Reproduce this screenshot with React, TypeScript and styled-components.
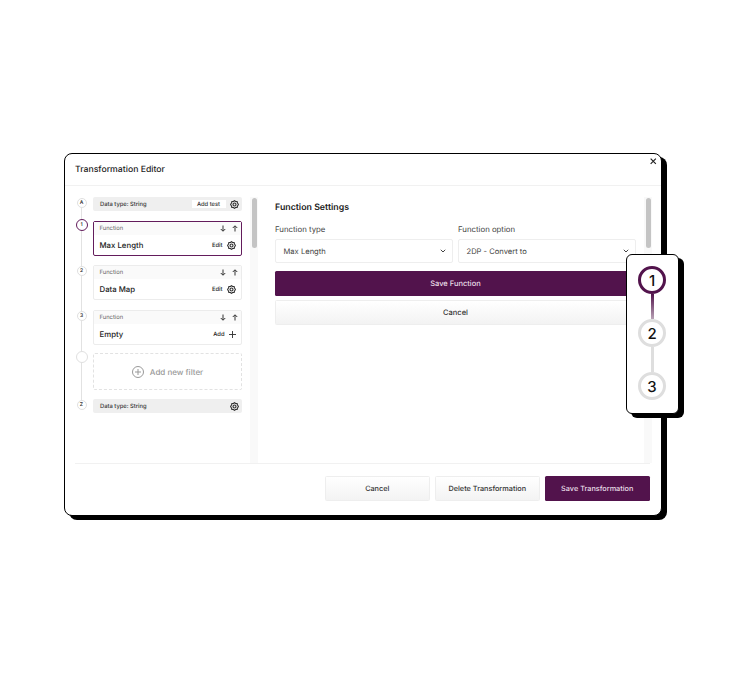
import React from "react";
import styled, { createGlobalStyle } from "styled-components";

const Global = createGlobalStyle`
  html, body { margin: 0; padding: 0; background: #fff; }
  body { font-family: Inter, "Liberation Sans", sans-serif; color: #222; text-rendering: geometricPrecision; }
`;

const Page = styled.div`
  width: 750px;
  height: 673px;
  padding: 153px 0 0 64px;
  box-sizing: border-box;
  overflow: hidden;
`;

const Modal = styled.div`
  position: relative;
  width: 598px;
  height: 362.5px;
  box-sizing: border-box;
  background: #fff;
  border: 1.5px solid #000;
  border-radius: 8px;
  box-shadow: 5px 4px 0 0 #000;
  display: flex;
  flex-direction: column;
`;

const Header = styled.div`
  height: 31px;
  padding-left: 10px;
  display: flex;
  align-items: center;
  border-bottom: 1px solid #f1f1f1;
  font-size: 8.7px;
  font-weight: 500;
  color: #222;
  flex: none;
`;

const Close = styled.svg`
  position: absolute;
  top: 4px;
  right: 4.5px;
  width: 6.5px;
  height: 6.5px;
`;

const Body = styled.div`
  flex: 1;
  min-height: 0;
  margin: 0 11px 0 10px;
  display: flex;
  border-bottom: 1px solid #f1f1f1;
  padding-top: 11px;
`;

const Timeline = styled.div`
  position: relative;
  width: 167px;
  flex: none;
  display: flex;
  flex-direction: column;
`;

const Rail = styled.div`
  position: absolute;
  left: 5.5px;
  top: 8px;
  width: 1.5px;
  height: 200px;
  background: #e2e2e2;
`;

const Row = styled.div<{ $mt: number }>`
  position: relative;
  display: flex;
  align-items: center;
  margin-top: ${(p) => p.$mt}px;
`;

const Marker = styled.div<{ $active?: boolean; $big?: boolean }>`
  position: absolute;
  left: ${(p) => (p.$big || p.$active ? "0.5px" : "1.5px")};
  top: ${(p) => (p.$big || p.$active ? "-2px" : "1px")};
  width: ${(p) => (p.$big || p.$active ? 12 : 10)}px;
  height: ${(p) => (p.$big || p.$active ? 12 : 10)}px;
  box-sizing: border-box;
  border-radius: 50%;
  background: #fff;
  border: ${(p) => (p.$active ? "1.5px solid #631c5c" : "1px solid #e0e0e0")};
  display: flex;
  align-items: center;
  justify-content: center;
  font-size: 5px;
  font-weight: 600;
  color: #333;
`;

const RowContent = styled.div`
  margin-left: 18px;
  width: 149px;
`;

const TypeBar = styled.div`
  height: 14px;
  box-sizing: border-box;
  background: #efefef;
  border-radius: 2px;
  padding: 0 3px 0 7px;
  display: flex;
  align-items: center;
  font-size: 5.8px;
  font-weight: 500;
  color: #333;
`;

const Grow = styled.div`
  flex: 1;
`;

const AddTest = styled.div`
  width: 34px;
  height: 8px;
  background: #fff;
  display: flex;
  align-items: center;
  justify-content: center;
  font-size: 5.8px;
  font-weight: 500;
  margin-right: 4.5px;
`;

const Card = styled.div<{ $active?: boolean }>`
  height: 35px;
  box-sizing: border-box;
  border-radius: 2px;
  border: ${(p) => (p.$active ? "1.5px solid #631c5c" : "1px solid #ececec")};
  display: flex;
  flex-direction: column;
  background: #fff;
`;

const CardHead = styled.div`
  height: 12.5px;
  background: #fafafa;
  padding: 0 3px 0 5.5px;
  display: flex;
  align-items: center;
  font-size: 5.8px;
  color: #666;
  flex: none;
`;

const Arrows = styled.div`
  display: flex;
  gap: 6px;
`;

const CardBody = styled.div`
  flex: 1;
  display: flex;
  align-items: center;
  padding: 1px 5px 0 5.5px;
  font-size: 7.8px;
  font-weight: 500;
  color: #222;
`;

const CardAction = styled.span`
  font-size: 5.8px;
  font-weight: 500;
  margin-right: 4.5px;
`;

const AddFilter = styled.div`
  height: 37px;
  box-sizing: border-box;
  border: 1px dashed #e2e2e2;
  border-radius: 2px;
  display: flex;
  align-items: center;
  justify-content: center;
  gap: 6px;
  font-size: 8px;
  font-weight: 500;
  color: #999;
`;

const Track = styled.div`
  width: 8px;
  flex: none;
  background: #f9f9f9;
  margin-left: 8px;
  padding: 1px 1.5px 0;
  box-sizing: border-box;
`;

const Thumb = styled.div`
  width: 5px;
  height: 50px;
  border-radius: 3px;
  background: #c4c4c4;
`;

const Settings = styled.div`
  width: 361px;
  margin-left: 17px;
  flex: none;
  display: flex;
  flex-direction: column;
`;

const SettingsTitle = styled.div`
  font-size: 8.8px;
  font-weight: 600;
  color: #222;
  line-height: 11px;
  margin-top: 5px;
`;

const Fields = styled.div`
  display: grid;
  grid-template-columns: 178px 178px;
  column-gap: 5px;
  margin-top: 11px;
`;

const Field = styled.div`
  display: flex;
  flex-direction: column;
`;

const Label = styled.div`
  font-size: 7.8px;
  line-height: 10px;
  color: #444;
  margin-bottom: 5px;
`;

const Select = styled.div`
  height: 24px;
  box-sizing: border-box;
  border: 1px solid #eee;
  border-radius: 2px;
  padding: 0 6px 0 7.5px;
  display: flex;
  align-items: center;
  justify-content: space-between;
  font-size: 7.6px;
  color: #444;
`;

const PrimaryWide = styled.div`
  height: 25px;
  margin-top: 8px;
  background: #52134c;
  border-radius: 1.5px;
  color: #e9dfe8;
  display: flex;
  align-items: center;
  justify-content: center;
  font-size: 7.5px;
  font-weight: 500;
`;

const SecondaryWide = styled.div`
  height: 25px;
  margin-top: 4px;
  box-sizing: border-box;
  border: 1px solid #eee;
  border-radius: 1.5px;
  background: linear-gradient(#fff, #f3f3f3);
  display: flex;
  align-items: center;
  justify-content: center;
  font-size: 7.5px;
  font-weight: 500;
  color: #333;
`;

const Footer = styled.div`
  height: 50.5px;
  flex: none;
  display: flex;
  justify-content: flex-end;
  gap: 4.5px;
  padding: 12px 11px 0 0;
  box-sizing: border-box;
`;

const FooterBtn = styled.div<{ $primary?: boolean }>`
  width: 105.5px;
  height: 25px;
  box-sizing: border-box;
  border-radius: 1.5px;
  display: flex;
  align-items: center;
  justify-content: center;
  font-size: 7.3px;
  font-weight: 500;
  ${(p) =>
    p.$primary
      ? "background: #52134c; color: #e9dfe8;"
      : "border: 1px solid #eee; background: linear-gradient(#fff, #f3f3f3); color: #333;"}
`;

const Stepper = styled.div`
  position: absolute;
  left: 560.5px;
  top: 99.5px;
  width: 53px;
  height: 160px;
  box-sizing: border-box;
  background: #fff;
  border: 1.5px solid #000;
  border-radius: 6px;
  box-shadow: 5px 4px 0 0 #000;
  display: flex;
  flex-direction: column;
  align-items: center;
  padding-top: 11.5px;
`;

const Step = styled.div<{ $active?: boolean }>`
  width: 28px;
  height: 28px;
  box-sizing: border-box;
  border-radius: 50%;
  border: 3px solid ${(p) => (p.$active ? "#52134c" : "#dedede")};
  display: flex;
  align-items: center;
  justify-content: center;
  font-size: 15px;
  font-weight: 500;
  color: #111;
  background: #fff;
`;

const StepLine = styled.div<{ $active?: boolean }>`
  width: 3px;
  height: 25px;
  background: ${(p) => (p.$active ? "linear-gradient(#52134c, #b9a3b6)" : "#dedede")};
`;

const Gear = () => (
  <svg width="9" height="9" viewBox="0 0 24 24" fill="none" stroke="#333" strokeWidth="3" strokeLinejoin="round">
    <path d="M12 1.5 15 4h4l1 4 2.5 4-2.5 4-1 4h-4l-3 2.5L9 20H5l-1-4-2.5-4L4 8l1-4h4z" />
    <circle cx="12" cy="12" r="4" />
  </svg>
);

const Down = () => (
  <svg width="6" height="7" viewBox="0 0 12 14" fill="none" stroke="#333" strokeWidth="2">
    <path d="M6 1v11M1.5 8 6 12.5 10.5 8" />
  </svg>
);

const Up = () => (
  <svg width="6" height="7" viewBox="0 0 12 14" fill="none" stroke="#333" strokeWidth="2">
    <path d="M6 13V2M1.5 6 6 1.5 10.5 6" />
  </svg>
);

const Plus = () => (
  <svg width="7" height="7" viewBox="0 0 12 12" fill="none" stroke="#333" strokeWidth="1.6">
    <path d="M6 0v12M0 6h12" />
  </svg>
);

const Chevron = () => (
  <svg width="6" height="4" viewBox="0 0 12 8" fill="none" stroke="#444" strokeWidth="2">
    <path d="M1.5 1.5 6 6l4.5-4.5" />
  </svg>
);

const functions = [
  { n: "2", name: "Data Map", action: "Edit", icon: <Gear />, mt: 9 },
  { n: "3", name: "Empty", action: "Add", icon: <Plus />, mt: 10 },
];

const FunctionHead = () => (
  <CardHead>
    Function
    <Grow />
    <Arrows>
      <Down />
      <Up />
    </Arrows>
  </CardHead>
);

export default function App() {
  return (
    <Page>
      <Global />
      <Modal>
        <Header>Transformation Editor</Header>
        <Close viewBox="0 0 10 10" fill="none" stroke="#222" strokeWidth="1.8">
          <path d="M1 1l8 8M9 1 1 9" />
        </Close>
        <Body>
          <Timeline>
            <Rail />
            <Row $mt={0}>
              <Marker>A</Marker>
              <RowContent>
                <TypeBar>
                  Data type: String
                  <Grow />
                  <AddTest>Add test</AddTest>
                  <Gear />
                </TypeBar>
              </RowContent>
            </Row>
            <Row $mt={10}>
              <Marker $active>1</Marker>
              <RowContent>
                <Card $active>
                  <FunctionHead />
                  <CardBody>
                    Max Length
                    <Grow />
                    <CardAction>Edit</CardAction>
                    <Gear />
                  </CardBody>
                </Card>
              </RowContent>
            </Row>
            {functions.map((f) => (
              <Row $mt={f.mt} key={f.n}>
                <Marker>{f.n}</Marker>
                <RowContent>
                  <Card>
                    <FunctionHead />
                    <CardBody>
                      {f.name}
                      <Grow />
                      <CardAction>{f.action}</CardAction>
                      {f.icon}
                    </CardBody>
                  </Card>
                </RowContent>
              </Row>
            ))}
            <Row $mt={8}>
              <Marker $big />
              <RowContent>
                <AddFilter>
                  <svg width="12" height="12" viewBox="0 0 12 12" fill="none" stroke="#999" strokeWidth="1">
                    <circle cx="6" cy="6" r="5.5" />
                    <path d="M6 3v6M3 6h6" />
                  </svg>
                  Add new filter
                </AddFilter>
              </RowContent>
            </Row>
            <Row $mt={9}>
              <Marker>Z</Marker>
              <RowContent>
                <TypeBar>
                  Data type: String
                  <Grow />
                  <Gear />
                </TypeBar>
              </RowContent>
            </Row>
          </Timeline>
          <Track>
            <Thumb />
          </Track>
          <Settings>
            <SettingsTitle>Function Settings</SettingsTitle>
            <Fields>
              <Field>
                <Label>Function type</Label>
                <Select>
                  Max Length
                  <Chevron />
                </Select>
              </Field>
              <Field>
                <Label>Function option</Label>
                <Select>
                  2DP - Convert to
                  <Chevron />
                </Select>
              </Field>
            </Fields>
            <PrimaryWide>Save Function</PrimaryWide>
            <SecondaryWide>Cancel</SecondaryWide>
          </Settings>
          <Track>
            <Thumb />
          </Track>
        </Body>
        <Footer>
          <FooterBtn>Cancel</FooterBtn>
          <FooterBtn>Delete Transformation</FooterBtn>
          <FooterBtn $primary>Save Transformation</FooterBtn>
        </Footer>
        <Stepper>
          <Step $active>1</Step>
          <StepLine $active />
          <Step>2</Step>
          <StepLine />
          <Step>3</Step>
        </Stepper>
      </Modal>
    </Page>
  );
}
